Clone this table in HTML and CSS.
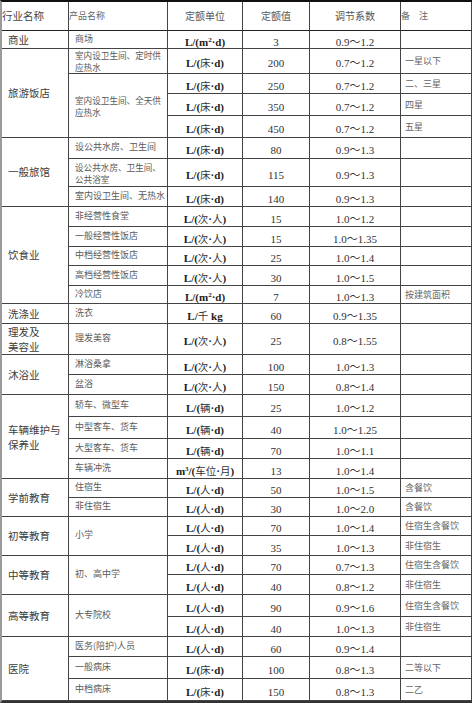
FILE: index.html
```html
<!DOCTYPE html>
<html lang="zh-CN">
<head>
<meta charset="utf-8">
<title>用水定额</title>
<link rel="stylesheet" href="styles.css">
</head>
<body>
<table class="quota">
  <colgroup>
    <col class="w-ind"><col class="w-prod"><col class="w-unit"><col class="w-val"><col class="w-coef"><col class="w-note">
  </colgroup>
  <thead>
    <tr class="h29">
      <th class="hd-ind">行业名称</th>
      <th class="hd-prod">产品名称</th>
      <th class="hd-c">定额单位</th>
      <th class="hd-c">定额值</th>
      <th class="hd-c">调节系数</th>
      <th class="hd-note">备　注</th>
    </tr>
  </thead>
  <tbody>
    <tr class="h18">
      <td class="ind">商业</td><td class="prod">商场</td>
      <td class="unit">L/(m<sup>2</sup>·d)</td><td class="val">3</td><td class="val">0.9～1.2</td><td class="note"></td>
    </tr>
    <tr class="h25">
      <td class="ind" rowspan="4">旅游饭店</td><td class="prod two">室内设卫生间、定时供<br>应热水</td>
      <td class="unit">L/(<span class="cj">床</span>·d)</td><td class="val">200</td><td class="val">0.7～1.2</td><td class="note">一星以下</td>
    </tr>
    <tr class="h20">
      <td class="prod two" rowspan="3">室内设卫生间、全天供<br>应热水</td>
      <td class="unit">L/(<span class="cj">床</span>·d)</td><td class="val">250</td><td class="val">0.7～1.2</td><td class="note">二、三星</td>
    </tr>
    <tr class="h22">
      <td class="unit">L/(<span class="cj">床</span>·d)</td><td class="val">350</td><td class="val">0.7～1.2</td><td class="note">四星</td>
    </tr>
    <tr class="h22">
      <td class="unit">L/(<span class="cj">床</span>·d)</td><td class="val">450</td><td class="val">0.7～1.2</td><td class="note">五星</td>
    </tr>
    <tr class="h21">
      <td class="ind" rowspan="3">一般旅馆</td><td class="prod">设公共水房、卫生间</td>
      <td class="unit">L/(<span class="cj">床</span>·d)</td><td class="val">80</td><td class="val">0.9～1.3</td><td class="note"></td>
    </tr>
    <tr class="h28">
      <td class="prod two">设公共水房、卫生间、<br>公共浴室</td>
      <td class="unit">L/(<span class="cj">床</span>·d)</td><td class="val">115</td><td class="val">0.9～1.3</td><td class="note"></td>
    </tr>
    <tr class="h20">
      <td class="prod">室内设卫生间、无热水</td>
      <td class="unit">L/(<span class="cj">床</span>·d)</td><td class="val">140</td><td class="val">0.9～1.3</td><td class="note"></td>
    </tr>
    <tr class="h20">
      <td class="ind" rowspan="5">饮食业</td><td class="prod">非经营性食堂</td>
      <td class="unit">L/(<span class="cj">次</span>·<span class="cj">人</span>)</td><td class="val">15</td><td class="val">1.0～1.2</td><td class="note"></td>
    </tr>
    <tr class="h20">
      <td class="prod">一般经营性饭店</td>
      <td class="unit">L/(<span class="cj">次</span>·<span class="cj">人</span>)</td><td class="val">15</td><td class="val">1.0～1.35</td><td class="note"></td>
    </tr>
    <tr class="h19">
      <td class="prod">中档经营性饭店</td>
      <td class="unit">L/(<span class="cj">次</span>·<span class="cj">人</span>)</td><td class="val">25</td><td class="val">1.0～1.4</td><td class="note"></td>
    </tr>
    <tr class="h20">
      <td class="prod">高档经营性饭店</td>
      <td class="unit">L/(<span class="cj">次</span>·<span class="cj">人</span>)</td><td class="val">30</td><td class="val">1.0～1.5</td><td class="note"></td>
    </tr>
    <tr class="h18">
      <td class="prod">冷饮店</td>
      <td class="unit">L/(m<sup>2</sup>·d)</td><td class="val">7</td><td class="val">1.0～1.3</td><td class="note">按建筑面积</td>
    </tr>
    <tr class="h20">
      <td class="ind">洗涤业</td><td class="prod">洗衣</td>
      <td class="unit">L/<span class="cj">千</span> kg</td><td class="val">60</td><td class="val">0.9～1.35</td><td class="note"></td>
    </tr>
    <tr class="h31">
      <td class="ind two">理发及<br>美容业</td><td class="prod">理发美容</td>
      <td class="unit">L/(<span class="cj">次</span>·<span class="cj">人</span>)</td><td class="val">25</td><td class="val">0.8～1.55</td><td class="note"></td>
    </tr>
    <tr class="h20">
      <td class="ind" rowspan="2">沐浴业</td><td class="prod">淋浴桑拿</td>
      <td class="unit">L/(<span class="cj">次</span>·<span class="cj">人</span>)</td><td class="val">100</td><td class="val">1.0～1.3</td><td class="note"></td>
    </tr>
    <tr class="h20">
      <td class="prod">盆浴</td>
      <td class="unit">L/(<span class="cj">次</span>·<span class="cj">人</span>)</td><td class="val">150</td><td class="val">0.8～1.4</td><td class="note"></td>
    </tr>
    <tr class="h22">
      <td class="ind two" rowspan="4">车辆维护与<br>保养业</td><td class="prod">轿车、微型车</td>
      <td class="unit">L/(<span class="cj">辆</span>·d)</td><td class="val">25</td><td class="val">1.0～1.2</td><td class="note"></td>
    </tr>
    <tr class="h22">
      <td class="prod">中型客车、货车</td>
      <td class="unit">L/(<span class="cj">辆</span>·d)</td><td class="val">40</td><td class="val">1.0～1.25</td><td class="note"></td>
    </tr>
    <tr class="h20">
      <td class="prod">大型客车、货车</td>
      <td class="unit">L/(<span class="cj">辆</span>·d)</td><td class="val">70</td><td class="val">1.0～1.1</td><td class="note"></td>
    </tr>
    <tr class="h20">
      <td class="prod">车辆冲洗</td>
      <td class="unit">m<sup>3</sup>/(<span class="cj">车位</span>·<span class="cj">月</span>)</td><td class="val">13</td><td class="val">1.0～1.4</td><td class="note"></td>
    </tr>
    <tr class="h19">
      <td class="ind" rowspan="2">学前教育</td><td class="prod">住宿生</td>
      <td class="unit">L/(<span class="cj">人</span>·d)</td><td class="val">50</td><td class="val">1.0～1.5</td><td class="note">含餐饮</td>
    </tr>
    <tr class="h19">
      <td class="prod">非住宿生</td>
      <td class="unit">L/(<span class="cj">人</span>·d)</td><td class="val">30</td><td class="val">1.0～2.0</td><td class="note">含餐饮</td>
    </tr>
    <tr class="h19">
      <td class="ind" rowspan="2">初等教育</td><td class="prod" rowspan="2">小学</td>
      <td class="unit">L/(<span class="cj">人</span>·d)</td><td class="val">70</td><td class="val">1.0～1.4</td><td class="note">住宿生含餐饮</td>
    </tr>
    <tr class="h20">
      <td class="unit">L/(<span class="cj">人</span>·d)</td><td class="val">35</td><td class="val">1.0～1.3</td><td class="note">非住宿生</td>
    </tr>
    <tr class="h19">
      <td class="ind" rowspan="2">中等教育</td><td class="prod" rowspan="2">初、高中学</td>
      <td class="unit">L/(<span class="cj">人</span>·d)</td><td class="val">70</td><td class="val">0.7～1.3</td><td class="note">住宿生含餐饮</td>
    </tr>
    <tr class="h20">
      <td class="unit">L/(<span class="cj">人</span>·d)</td><td class="val">40</td><td class="val">0.8～1.2</td><td class="note">非住宿生</td>
    </tr>
    <tr class="h22">
      <td class="ind" rowspan="2">高等教育</td><td class="prod" rowspan="2">大专院校</td>
      <td class="unit">L/(<span class="cj">人</span>·d)</td><td class="val">90</td><td class="val">0.9～1.6</td><td class="note">住宿生含餐饮</td>
    </tr>
    <tr class="h20">
      <td class="unit">L/(<span class="cj">人</span>·d)</td><td class="val">40</td><td class="val">1.0～1.3</td><td class="note">非住宿生</td>
    </tr>
    <tr class="h20">
      <td class="ind" rowspan="3">医院</td><td class="prod">医务(陪护)人员</td>
      <td class="unit">L/(<span class="cj">人</span>·d)</td><td class="val">60</td><td class="val">0.9～1.4</td><td class="note"></td>
    </tr>
    <tr class="h22">
      <td class="prod">一般病床</td>
      <td class="unit">L/(<span class="cj">床</span>·d)</td><td class="val">100</td><td class="val">0.8～1.3</td><td class="note">二等以下</td>
    </tr>
    <tr class="h22">
      <td class="prod">中档病床</td>
      <td class="unit">L/(<span class="cj">床</span>·d)</td><td class="val">150</td><td class="val">0.8～1.3</td><td class="note">二乙</td>
    </tr>
  </tbody>
</table>
</body>
</html>
```

FILE: styles.css
```css
html, body {
  margin: 0;
  padding: 0;
  background: #ffffff;
}

body {
  font-family: "Liberation Serif", "Noto Sans CJK SC", serif;
  color: #333333;
}

.quota {
  border-collapse: separate;
  border-spacing: 0;
  table-layout: fixed;
  width: 472px;
  border-top: 2px solid #111111;
  border-left: 2px solid #9a9a9a;
  border-bottom: 2px solid #333333;
}

.w-ind { width: 67px; }
.w-prod { width: 99px; }
.w-unit { width: 75px; }
.w-val { width: 67px; }
.w-coef { width: 91px; }
.w-note { width: 71px; }

.quota th,
.quota td {
  border-right: 1px solid #444444;
  border-bottom: 1px solid #444444;
  padding: 0;
  overflow: hidden;
  white-space: nowrap;
  vertical-align: middle;
  font-weight: normal;
}

.h18 { height: 18px; }
.h19 { height: 19px; }
.h20 { height: 20px; }
.h21 { height: 21px; }
.h22 { height: 22px; }
.h25 { height: 25px; }
.h28 { height: 28px; }
.h29 { height: 29px; }
.h31 { height: 31px; }

/* header */
.quota th {
  border-bottom-color: #222222;
  line-height: 14px;
  font-family: "Noto Sans CJK SC", sans-serif;
}
.hd-ind {
  text-align: left;
  padding-left: 6px;
  font-size: 10.5px;
  color: #444444;
}
.hd-prod {
  text-align: left;
  padding-left: 6px;
  padding-bottom: 2px;
  font-size: 9px;
  color: #666666;
}
.hd-c {
  text-align: center;
  padding-top: 3px;
  font-size: 10px;
  color: #555555;
}
.hd-note {
  text-align: left;
  padding-left: 5px;
  padding-bottom: 2px;
  font-size: 9px;
  color: #666666;
}

/* industry column */
.ind {
  font-family: "Noto Sans CJK SC", sans-serif;
  font-size: 10.5px;
  line-height: 14px;
  padding-left: 6px !important;
  color: #3c3c3c;
}
.ind.two {
  line-height: 15px;
}

/* product column */
.prod {
  font-family: "Noto Sans CJK SC", sans-serif;
  font-size: 9px;
  line-height: 12px;
  padding-left: 6px !important;
  padding-bottom: 2px !important;
  color: #5a5a5a;
}
.prod.two {
  font-size: 8.6px;
  line-height: 12px;
  padding-bottom: 0 !important;
}

/* unit column */
.unit {
  text-align: center;
  font-size: 11px;
  line-height: 12px;
  padding-top: 4px !important;
  font-weight: bold !important;
  color: #222222;
}
.unit sup {
  font-size: 7px;
  line-height: 0;
  vertical-align: 4px;
}
.cj {
  font-family: "Noto Sans CJK SC", sans-serif;
  font-weight: normal;
  font-size: 10.5px;
  color: #333333;
}

/* value and coefficient columns */
.val {
  text-align: center;
  font-size: 11px;
  line-height: 12px;
  padding-top: 4px !important;
  color: #333333;
}

/* notes column */
.note {
  font-family: "Noto Sans CJK SC", sans-serif;
  font-size: 9px;
  line-height: 12px;
  padding-left: 4px !important;
  color: #666666;
}
```
